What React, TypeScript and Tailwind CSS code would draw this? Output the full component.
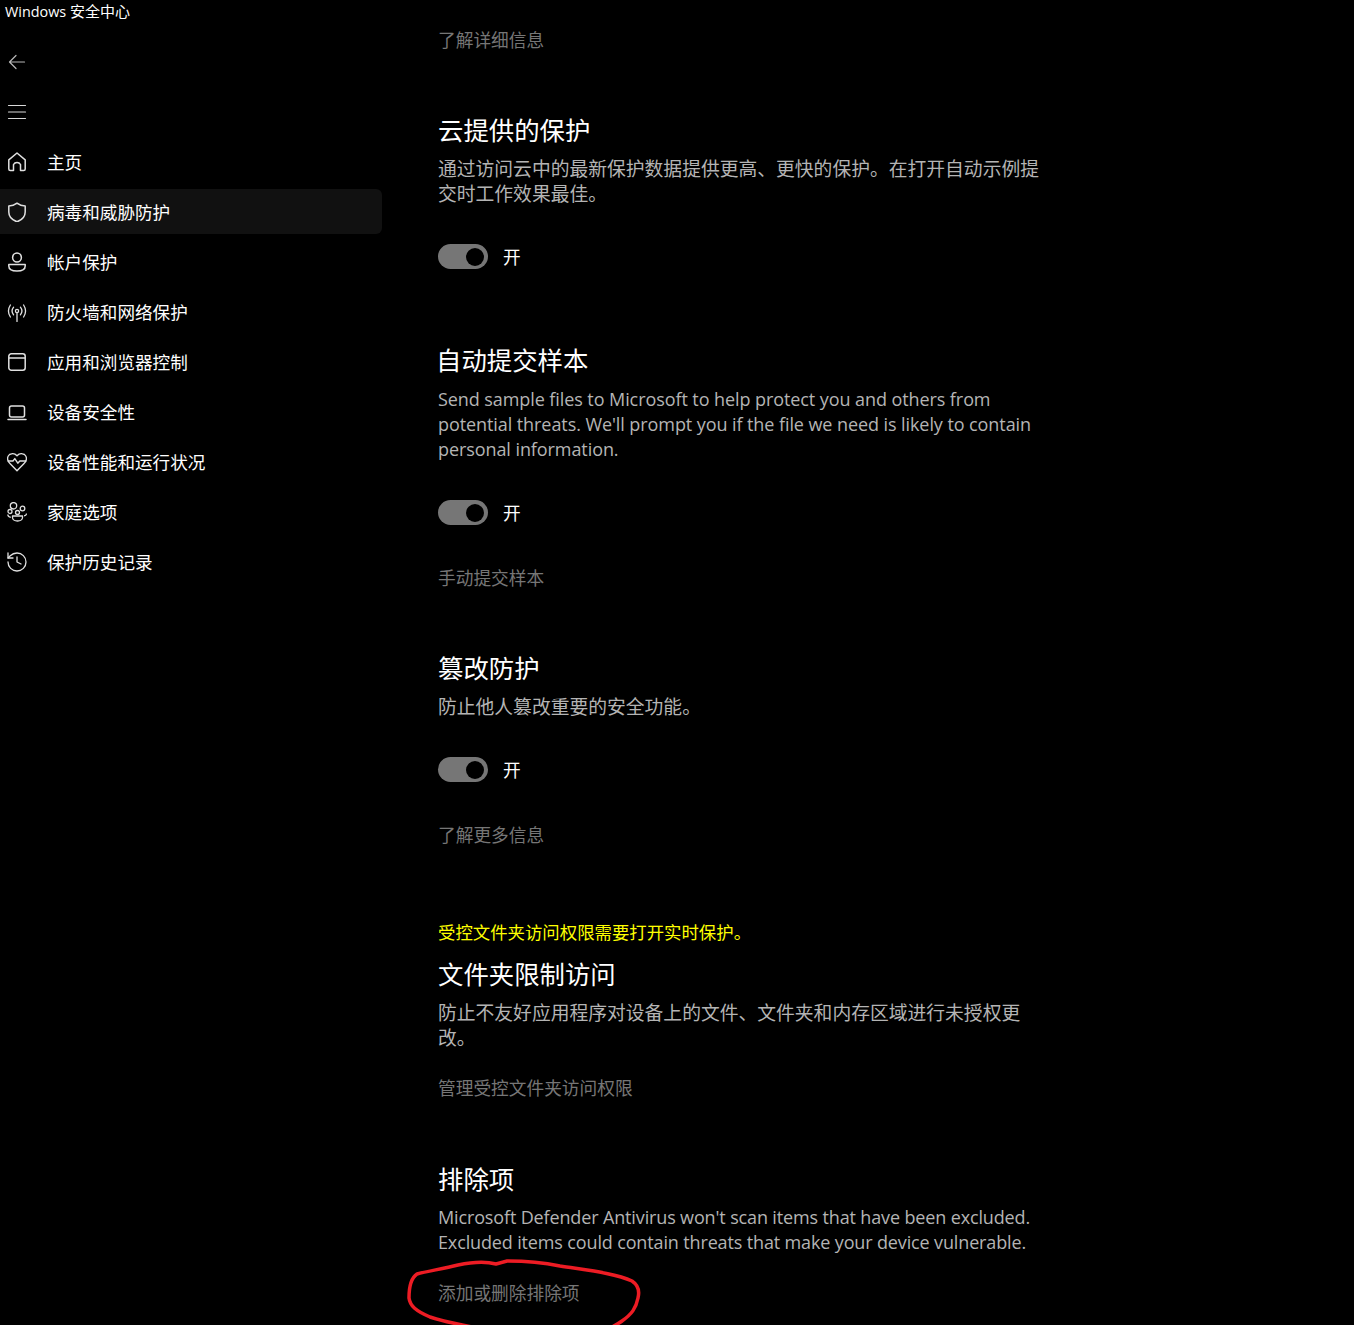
import React from "react";
import { History } from "lucide-react";

const fontStack = "font-['Open_Sans','Noto_Sans_CJK_SC',sans-serif]";

const BackIcon = () => (
  <svg width="20" height="20" viewBox="0 0 20 20" fill="none" stroke="currentColor" strokeWidth="1.2" strokeLinecap="round" strokeLinejoin="round">
    <path d="M2.500 10h15M9 3.500 2.500 10 9 16.500" />
  </svg>
);

const MenuIcon = () => (
  <svg width="20" height="20" viewBox="0 0 20 20" fill="none" stroke="currentColor" strokeWidth="1.2" strokeLinecap="round">
    <path d="M1.500 3.500h17M1.500 10h17M1.500 16.500h17" />
  </svg>
);

const HomeIcon = () => (
  <svg width="20" height="20" viewBox="0 0 20 20" fill="none" stroke="currentColor" strokeWidth="1.5" strokeLinejoin="round">
    <path d="M10 1 1.800 7.800V17a1.500 1.500 0 0 0 1.500 1.500h3.200v-6a4 4 0 0 1 7 0v6h3.200a1.500 1.500 0 0 0 1.500-1.500V7.800z" />
  </svg>
);

const ShieldIcon = () => (
  <svg width="20" height="20" viewBox="0 0 20 20" fill="none" stroke="currentColor" strokeWidth="1.5" strokeLinejoin="round">
    <path d="M10 1.200C7.500 3.200 4.500 4 1.800 4v6c0 5 3.400 8 8.200 9.800 4.800-1.800 8.200-4.800 8.200-9.800V4c-2.700 0-5.700-.8-8.200-2.800z" />
  </svg>
);

const UserIcon = () => (
  <svg width="20" height="20" viewBox="0 0 20 20" fill="none" stroke="currentColor" strokeWidth="1.5">
    <circle cx="10" cy="5.500" r="4.400" />
    <path d="M1.800 12.500h16.400v1.500c0 3.200-3.600 5-8.200 5s-8.200-1.800-8.200-5z" strokeLinejoin="round" />
  </svg>
);

const AntennaIcon = () => (
  <svg width="20" height="20" viewBox="0 0 20 20" fill="none" stroke="currentColor" strokeWidth="1.3" strokeLinecap="round">
    <circle cx="10" cy="9" r="1.600" />
    <path d="M10 11v8.500" />
    <path d="M6.600 5.200a6 6 0 0 0 0 7.600M13.400 5.200a6 6 0 0 1 0 7.600" />
    <path d="M3.400 3a11 11 0 0 0 0 12M16.600 3a11 11 0 0 1 0 12" />
  </svg>
);

const WindowIcon = () => (
  <svg width="20" height="20" viewBox="0 0 20 20" fill="none" stroke="currentColor" strokeWidth="1.5">
    <rect x="1.800" y="1.800" width="16.400" height="16.400" rx="2.500" />
    <path d="M1.800 6h16.400" />
  </svg>
);

const LaptopIcon = () => (
  <svg width="20" height="20" viewBox="0 0 20 20" fill="none" stroke="currentColor" strokeWidth="1.500" strokeLinecap="round">
    <rect x="2.500" y="4" width="15" height="11" rx="2" />
    <path d="M1 17.500h18" />
  </svg>
);

const HeartIcon = () => (
  <svg width="20" height="20" viewBox="0 0 20 20" fill="none" stroke="currentColor" strokeWidth="1.400" strokeLinejoin="round">
    <path d="M10 3.800C8.500 2.100 6.600 1.300 4.600 1.800 1.900 2.400.2 5 .7 7.600c.3 1.700 1.300 3 2.500 4.200L10 18.800l6.800-7c1.200-1.200 2.200-2.500 2.500-4.200.5-2.600-1.200-5.200-3.900-5.800-2-.5-3.900.3-5.400 2z" />
    <path d="M.6 9h5.400l1.800-2.400 3 4.600 2-2.200h6.600" />
  </svg>
);

const FamilyIcon = () => (
  <svg width="20" height="20" viewBox="0 0 20 20" fill="none" stroke="currentColor" strokeWidth="1.300">
    <circle cx="6.500" cy="3.800" r="3.200" />
    <circle cx="15.500" cy="6.500" r="2.300" />
    <circle cx="3" cy="9.500" r="2" />
    <circle cx="10.500" cy="10.500" r="2" />
    <path d="M5.500 14h10v1.500c0 2-2.200 3.500-5 3.500s-5-1.500-5-3.500zM.8 12.500c0 1.500 1.200 2.500 3 2.800M19.500 11.500c0 1.200-1 2.200-2.500 2.400" strokeLinejoin="round" />
  </svg>
);

const navItems = [
  { label: "主页", icon: <HomeIcon /> },
  { label: "病毒和威胁防护", icon: <ShieldIcon />, active: true },
  { label: "帐户保护", icon: <UserIcon /> },
  { label: "防火墙和网络保护", icon: <AntennaIcon /> },
  { label: "应用和浏览器控制", icon: <WindowIcon /> },
  { label: "设备安全性", icon: <LaptopIcon /> },
  { label: "设备性能和运行状况", icon: <HeartIcon /> },
  { label: "家庭选项", icon: <FamilyIcon /> },
  { label: "保护历史记录", icon: <History size={24} strokeWidth={1.3} className="-m-[2px]" /> },
];

const Heading = ({ children, className = "" }: { children: React.ReactNode; className?: string }) => (
  <h2 className={`text-[25.4px] leading-[34px] text-white ${className}`}>{children}</h2>
);

const Body = ({ children, className = "" }: { children: React.ReactNode; className?: string }) => (
  <p className={`text-[18.8px] leading-[25px] text-[#b4b4b4] ${className}`}>{children}</p>
);

const EnBody = ({ children, className = "" }: { children: React.ReactNode; className?: string }) => (
  <p className={`text-[18px] leading-[25px] text-[#b4b4b4] ${className}`}>{children}</p>
);

const LinkText = ({ children, className = "" }: { children: React.ReactNode; className?: string }) => (
  <div className={`text-[17.7px] leading-[24px] text-[#767676] ${className}`}>{children}</div>
);

const Toggle = ({ className = "" }: { className?: string }) => (
  <div className={`flex h-[25px] items-center gap-[15px] ${className}`}>
    <div className="flex h-[25px] w-[50px] items-center justify-end rounded-full bg-[#767676] pr-[4px]">
      <div className="h-[18px] w-[18px] rounded-full bg-black" />
    </div>
    <span className="relative top-[1px] text-[17.7px] text-white">开</span>
  </div>
);

export default function App() {
  return (
    <div className={`relative flex h-[1325px] w-full overflow-hidden bg-black ${fontStack}`}>
      <aside className="w-[438px] shrink-0 text-white">
        <div className="h-[37px] pl-[5px] pt-[1px] text-[14.4px] leading-[20px]">
          Windows <span className="text-[15px]">安全中心</span>
        </div>
        <div className="flex h-[50px] items-center pl-[7px] text-[#b8b8b8]">
          <BackIcon />
        </div>
        <div className="flex h-[50px] items-center pl-[7px] text-[#d8d8d8]">
          <MenuIcon />
        </div>
        {navItems.map((item) => (
          <div key={item.label} className="flex h-[50px] items-center">
            <div
              className={`flex h-[45px] w-[382px] items-center gap-[20px] rounded-r-md pl-[7px] ${
                item.active ? "mb-[1px] bg-[#111111]" : ""
              }`}
            >
              <span className="flex h-[20px] w-[20px] items-center justify-center text-[#e0e0e0]">{item.icon}</span>
              <span className="text-[17.6px] leading-[24px]">{item.label}</span>
            </div>
          </div>
        ))}
      </aside>

      <main className="w-[610px] pt-[28px]">
        <LinkText>了解详细信息</LinkText>

        <Heading className="mt-[61px]">云提供的保护</Heading>
        <Body className="mt-[10px]">通过访问云中的最新保护数据提供更高、更快的保护。在打开自动示例提交时工作效果最佳。</Body>
        <Toggle className="mt-[37px]" />

        <Heading className="-ml-[2px] mt-[74px]">自动提交样本</Heading>
        <EnBody className="mt-[10px] tracking-[-0.08px]">
          Send sample files to Microsoft to help protect you and others from potential threats. We'll prompt you if the
          file we need is likely to contain personal information.
        </EnBody>
        <Toggle className="mt-[38px]" />
        <LinkText className="mt-[41px]">手动提交样本</LinkText>

        <Heading className="mt-[61px]">篡改防护</Heading>
        <Body className="mt-[10px]">防止他人篡改重要的安全功能。</Body>
        <Toggle className="mt-[37px]" />
        <LinkText className="mt-[41px]">了解更多信息</LinkText>

        <div className="mt-[73px] text-[17.4px] leading-[24px] text-[#ffff00]">受控文件夹访问权限需要打开实时保护。</div>
        <Heading className="mt-[13px]">文件夹限制访问</Heading>
        <Body className="mt-[10px]">防止不友好应用程序对设备上的文件、文件夹和内存区域进行未授权更改。</Body>
        <LinkText className="mt-[25px]">管理受控文件夹访问权限</LinkText>

        <Heading className="mt-[62px]">排除项</Heading>
        <EnBody className="mt-[9px] tracking-[-0.14px]">
          Microsoft Defender Antivirus won't scan items that have been excluded. Excluded items could contain threats
          that make your device vulnerable.
        </EnBody>
        <LinkText className="mt-[26px]">添加或删除排除项</LinkText>
      </main>

      {/* hand-drawn annotation around the last link */}
      <svg className="absolute left-[400px] top-[1240px]" width="260" height="85" viewBox="0 0 260 85" fill="none">
        <path
          d="M96 24 C85 21 72 22 58 25 C42 29 28 31 17 34 C11 38 9 48 9 58 C10 66 16 71 30 77 C45 82 58 84 72 87 M96 24 L107 21 C125 21 140 22 160 26 C185 30 215 33 232 41 C238 45 240 50 238 58 C236 68 232 74 222 81 C218 84 214 86 210 88"
          stroke="#ed1c24"
          strokeWidth="3.5"
          strokeLinecap="round"
        />
      </svg>
    </div>
  );
}
